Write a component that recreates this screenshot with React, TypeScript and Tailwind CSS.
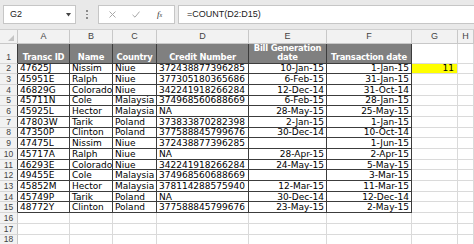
import React from "react";

const data: string[][] = [
  ["47625J", "Nissim", "Niue", "372438877396285", "10-Jan-15", "1-Jan-15"],
  ["45951E", "Ralph", "Niue", "377305180365686", "6-Feb-15", "31-Jan-15"],
  ["46829G", "Colorado", "Niue", "342241918266284", "12-Dec-14", "31-Oct-14"],
  ["45711N", "Cole", "Malaysia", "374968560688669", "6-Feb-15", "28-Jan-15"],
  ["45925L", "Hector", "Malaysia", "NA", "28-May-15", "25-May-15"],
  ["47803W", "Tarik", "Poland", "373833870282398", "2-Jan-15", "1-Jan-15"],
  ["47350P", "Clinton", "Poland", "377588845799676", "30-Dec-14", "10-Oct-14"],
  ["47475L", "Nissim", "Niue", "372438877396285", "", "1-Jun-15"],
  ["45717A", "Ralph", "Niue", "NA", "28-Apr-15", "2-Apr-15"],
  ["46293E", "Colorado", "Niue", "342241918266284", "24-May-15", "5-May-15"],
  ["49455E", "Cole", "Malaysia", "374968560688669", "", "3-Mar-15"],
  ["45852M", "Hector", "Malaysia", "378114288575940", "12-Mar-15", "11-Mar-15"],
  ["45749P", "Tarik", "Poland", "NA", "30-Dec-14", "12-Dec-14"],
  ["48772Y", "Clinton", "Poland", "377588845799676", "23-May-15", "2-May-15"],
];

const headers = ["Transc ID", "Name", "Country", "Credit Number", "Bill Generation date", "Transaction date"];
const letters = ["A", "B", "C", "D", "E", "F", "G", "H"];

export default function App() {
  const cells: React.ReactNode[] = [];

  // column header row
  cells.push(
    <div key="corner" className="bg-[#f2f2f2] border-r border-b border-[#c8c8c8] flex items-end justify-end pr-[3px] pb-[2px]">
      <svg width="6" height="6" viewBox="0 0 6 6">
        <polygon points="6,0 6,6 0,6" fill="#c4c4c4" />
      </svg>
    </div>
  );
  letters.forEach((l) => {
    cells.push(
      <div key={"h" + l} className="bg-[#f2f2f2] border-r border-b border-[#c8c8c8] flex items-center justify-center text-[9px] text-[#444] [font-family:'Liberation_Sans',sans-serif]">
        {l}
      </div>
    );
  });

  // row 1
  cells.push(
    <div key="r1" className="bg-[#f2f2f2] border-r border-b border-r-[#3c3c3c] border-b-[#d6d6d6] flex items-end justify-center pb-[1px] text-[8.5px] leading-[10px] text-[#444] [font-family:'Liberation_Sans',sans-serif]">
      1
    </div>
  );
  headers.forEach((h, i) => {
    cells.push(
      <div key={"hd" + i} className="bg-[#808080] border-r border-b border-[#3c3c3c] flex items-end justify-center text-center pb-[0.5px] text-white font-bold text-[8.4px] tracking-[-0.2px] leading-[9px] [font-family:'DejaVu_Sans',sans-serif] overflow-hidden">
        {i === 4 ? (
          <span className="block whitespace-nowrap">
            Bill Generation
            <br />
            date
          </span>
        ) : (
          <span className="block whitespace-nowrap">{h}</span>
        )}
      </div>
    );
  });
  cells.push(<div key="r1g" className="bg-white border-r border-b border-[#dadada]" />);
  cells.push(<div key="r1h" className="bg-white border-r border-b border-[#dadada]" />);

  // data rows 2-15
  data.forEach((row, ri) => {
    const n = ri + 2;
    cells.push(
      <div key={"rn" + n} className="bg-[#f2f2f2] border-r border-b border-r-[#3c3c3c] border-b-[#d6d6d6] flex items-center justify-center text-[8.5px] leading-[10px] text-[#444] [font-family:'Liberation_Sans',sans-serif]">
        {n}
      </div>
    );
    row.forEach((v, ci) => {
      const right = ci >= 4;
      cells.push(
        <div
          key={"c" + n + "-" + ci}
          className={
            right
              ? "bg-white border-r border-b border-[#3c3c3c] flex items-center justify-end pr-[2px] text-[9px] leading-[10px] text-black whitespace-nowrap overflow-hidden [font-family:'DejaVu_Sans',sans-serif]"
              : "bg-white border-r border-b border-[#3c3c3c] flex items-center justify-start pl-[2px] text-[9px] leading-[10px] text-black whitespace-nowrap overflow-hidden [font-family:'DejaVu_Sans',sans-serif]"
          }
        >
          {v}
        </div>
      );
    });
    if (n === 2) {
      cells.push(
        <div key="g2" className="bg-[#ffff00] border-r border-b border-[#dadada] flex items-center justify-end pr-[3px] text-[9px] leading-[10px] text-black [font-family:'DejaVu_Sans',sans-serif]">
          11
        </div>
      );
    } else {
      cells.push(<div key={"g" + n} className="bg-white border-r border-b border-[#dadada]" />);
    }
    cells.push(<div key={"hh" + n} className="bg-white border-r border-b border-[#dadada]" />);
  });

  // empty rows 16-18
  [16, 17, 18].forEach((n) => {
    cells.push(
      <div key={"rn" + n} className="bg-[#f2f2f2] border-r border-b border-r-[#c8c8c8] border-b-[#d6d6d6] flex items-center justify-center text-[8.5px] leading-[10px] text-[#444] [font-family:'Liberation_Sans',sans-serif]">
        {n}
      </div>
    );
    for (let c = 0; c < 8; c++) {
      cells.push(<div key={"e" + n + "-" + c} className="bg-white border-r border-b border-[#dadada]" />);
    }
  });

  return (
    <div className="w-[474px] h-[244px] overflow-hidden bg-white">
      {/* formula bar */}
      <div className="h-[30px] bg-[#e9e9e9] flex items-center pl-[3px] border-b border-[#d0d0d0]">
        <div className="w-[73px] h-[19px] bg-white border border-[#c6c6c6] flex items-center justify-between pl-[6px] pr-[4px] text-[9px] text-[#222] [font-family:'Liberation_Sans',sans-serif]">
          <span>G2</span>
          <svg width="5" height="4" viewBox="0 0 5 4">
            <polygon points="0,0 5,0 2.5,3.5" fill="#444" />
          </svg>
        </div>
        <div className="w-[22px] flex flex-col items-center justify-center gap-[2px]">
          <div className="w-[1.5px] h-[1.5px] bg-[#8a8a8a]" />
          <div className="w-[1.5px] h-[1.5px] bg-[#8a8a8a]" />
          <div className="w-[1.5px] h-[1.5px] bg-[#8a8a8a]" />
        </div>
        <div className="w-[77px] h-[19px] bg-white border border-[#c6c6c6] flex items-center">
          <svg className="ml-[10px]" width="7" height="7" viewBox="0 0 7 7">
            <path d="M0.5 0.5 L6.5 6.5 M6.5 0.5 L0.5 6.5" stroke="#a8a8a8" strokeWidth="1" />
          </svg>
          <svg className="ml-[16px]" width="8" height="7" viewBox="0 0 8 7">
            <path d="M0.5 3.8 L3 6.2 L7.5 0.6" stroke="#a8a8a8" strokeWidth="1" fill="none" />
          </svg>
          <span className="ml-[17px] italic text-[#333] text-[9px] leading-none [font-family:'Liberation_Serif',serif]">
            f<span className="text-[6px]">x</span>
          </span>
        </div>
        <div className="ml-[3px] flex-1 h-[19px] bg-white border border-r-0 border-[#c6c6c6] flex items-center pl-[8px] text-[9px] text-[#222] [font-family:'Liberation_Sans',sans-serif]">
          =COUNT(D2:D15)
        </div>
      </div>
      {/* sheet grid */}
      <div className="grid grid-cols-[18px_52px_43px_44px_92px_78px_85px_46px_1fr] grid-rows-[14px_19.5px_repeat(17,10.7px)]">
        {cells}
      </div>
    </div>
  );
}
